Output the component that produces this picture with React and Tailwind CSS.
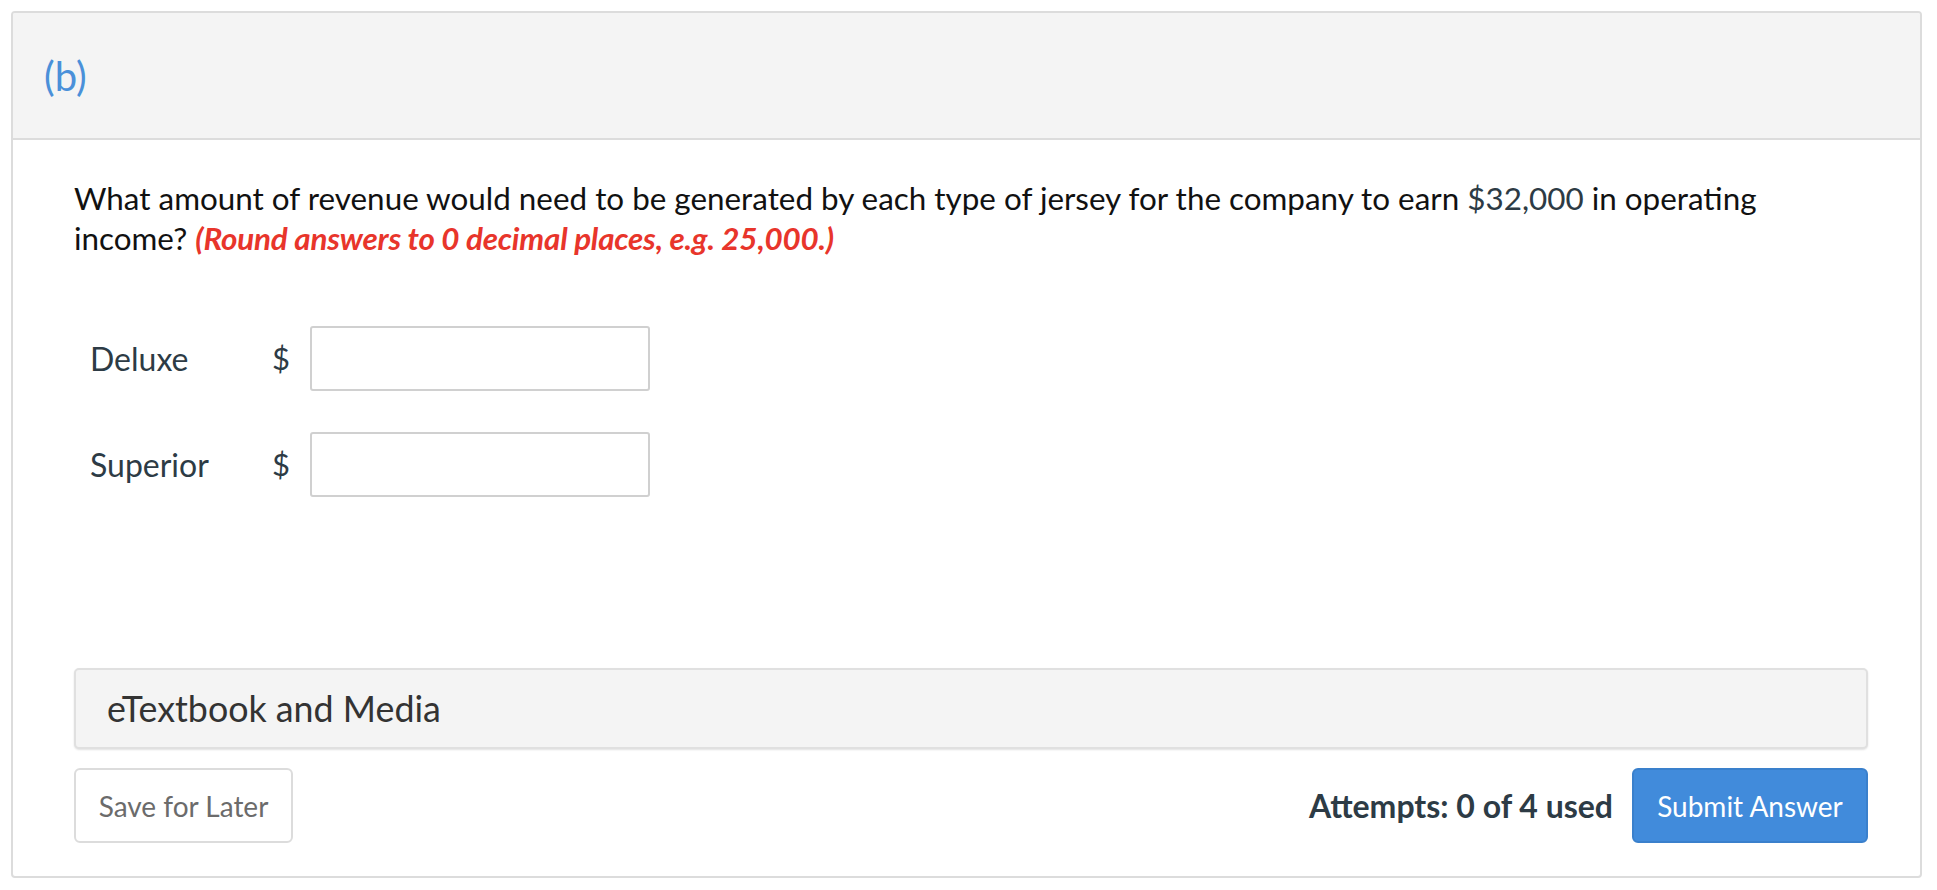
import React from 'react'

const font = { fontFamily: 'Lato, "Open Sans", sans-serif' }

function MoneyRow({ label }) {
  return (
    <div className="flex items-center h-[65px]">
      <span className="w-[198px] pl-[16px] text-[32px] text-[#2d3b45]">{label}</span>
      <span className="w-[38px] text-[31px] text-[#2d3b45]">$</span>
      <input
        type="text"
        className="w-[340px] h-[65px] border-2 border-[#d0d0d0] rounded-[3px] bg-white outline-none px-3 text-[28px]"
      />
    </div>
  )
}

export default function App() {
  return (
    <div className="min-h-screen bg-white pt-[11px] pl-[11px] pr-[15px]" style={font}>
      <div className="border-2 border-[#dcdcdc] rounded-[4px] overflow-hidden bg-white">
        <div className="h-[127px] bg-[#f4f4f4] border-b-2 border-[#dcdcdc] flex items-center pl-[31px]">
          <span className="text-[40px] text-[#4a90d9]">(b)</span>
        </div>

        <div className="pl-[61px] pr-[52px] pt-[38px] pb-[33px]">
          <p className="text-[31.4px] leading-[40px] text-[#111]">
            What amount of revenue would need to be generated by each type of jersey for the company to earn{' '}
            <span className="text-[#2d3b45]">$32,000</span> in operating
            <br />
            income?{' '}
            <span className="text-[#e8352b] font-bold italic tracking-[-0.2px]">
              (Round answers to 0 decimal places, e.g. 25,000.)
            </span>
          </p>

          <div className="mt-[68px] flex flex-col gap-[41px]">
            <MoneyRow label="Deluxe" />
            <MoneyRow label="Superior" />
          </div>

          <div className="mt-[171px] h-[81px] bg-[#f4f4f4] border-2 border-[#e0e0e0] rounded-[5px] shadow-[0_1px_2px_rgba(0,0,0,0.12)] flex items-center pl-[31px]">
            <span className="text-[35.8px] text-[#333]">eTextbook and Media</span>
          </div>

          <div className="mt-[19px] flex items-center">
            <button className="w-[219px] h-[75px] border-2 border-[#dcdcdc] rounded-[6px] bg-white text-[28px] text-[#6b6b6b]">
              Save for Later
            </button>
            <div className="ml-auto flex items-center gap-[19px]">
              <span className="text-[32px] font-bold text-[#2d3b45]">Attempts: 0 of 4 used</span>
              <button className="w-[236px] h-[75px] rounded-[6px] bg-[#418bdb] border-2 border-[#3a80cc] text-[28px] text-white">
                Submit Answer
              </button>
            </div>
          </div>
        </div>
      </div>
    </div>
  )
}
